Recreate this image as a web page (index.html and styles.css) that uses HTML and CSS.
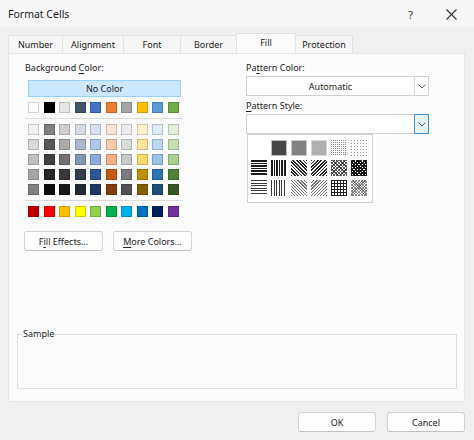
FILE: index.html
```html
<!DOCTYPE html>
<html>
<head>
<meta charset="utf-8">
<link rel="stylesheet" href="styles.css">
</head>
<body>
<div class="window">
  <div class="titlebar">
    <span class="title">Format Cells</span>
    <span class="help">?</span>
    <svg class="close" width="11" height="11" viewBox="0 0 11 11"><path d="M0.5 0.5 L10.5 10.5 M10.5 0.5 L0.5 10.5" stroke="#333" stroke-width="1.1" fill="none"/></svg>
  </div>
  <div class="tabs">
    <div class="tab">Number</div>
    <div class="tab">Alignment</div>
    <div class="tab">Font</div>
    <div class="tab">Border</div>
    <div class="tab active">Fill</div>
    <div class="tab">Protection</div>
  </div>
  <div class="panel">
    <div class="columns">
      <div class="left">
        <div class="label">Background <u>C</u>olor:</div>
        <div class="nocolor">No Color</div>
        <div class="swatches top">
          <i style="background:#ffffff"></i><i style="background:#000000"></i><i style="background:#e7e6e6"></i><i style="background:#44546a"></i><i style="background:#4472c4"></i><i style="background:#ed7d31"></i><i style="background:#a5a5a5"></i><i style="background:#ffc000"></i><i style="background:#5b9bd5"></i><i style="background:#70ad47"></i>
        </div>
        <div class="sep"></div>
        <div class="swatches grid">
          <i style="background:#f2f2f2"></i><i style="background:#808080"></i><i style="background:#d0cece"></i><i style="background:#d6dce4"></i><i style="background:#d9e1f2"></i><i style="background:#fce4d6"></i><i style="background:#ededed"></i><i style="background:#fff2cc"></i><i style="background:#ddebf7"></i><i style="background:#e2efda"></i>
          <i style="background:#d9d9d9"></i><i style="background:#595959"></i><i style="background:#aeaaaa"></i><i style="background:#acb9ca"></i><i style="background:#b4c6e7"></i><i style="background:#f8cbad"></i><i style="background:#dbdbdb"></i><i style="background:#ffe699"></i><i style="background:#bdd7ee"></i><i style="background:#c6e0b4"></i>
          <i style="background:#bfbfbf"></i><i style="background:#404040"></i><i style="background:#757171"></i><i style="background:#8497b0"></i><i style="background:#8ea9db"></i><i style="background:#f4b084"></i><i style="background:#c9c9c9"></i><i style="background:#ffd966"></i><i style="background:#9bc2e6"></i><i style="background:#a9d08e"></i>
          <i style="background:#a6a6a6"></i><i style="background:#262626"></i><i style="background:#3a3838"></i><i style="background:#333f4f"></i><i style="background:#305496"></i><i style="background:#c65911"></i><i style="background:#7b7b7b"></i><i style="background:#bf8f00"></i><i style="background:#2f75b5"></i><i style="background:#548235"></i>
          <i style="background:#808080"></i><i style="background:#0d0d0d"></i><i style="background:#171616"></i><i style="background:#222b35"></i><i style="background:#203764"></i><i style="background:#833c0c"></i><i style="background:#525252"></i><i style="background:#806000"></i><i style="background:#1f4e78"></i><i style="background:#375623"></i>
        </div>
        <div class="sep"></div>
        <div class="swatches std">
          <i style="background:#c00000"></i><i style="background:#ff0000"></i><i style="background:#ffc000"></i><i style="background:#ffff00"></i><i style="background:#92d050"></i><i style="background:#00b050"></i><i style="background:#00b0f0"></i><i style="background:#0070c0"></i><i style="background:#002060"></i><i style="background:#7030a0"></i>
        </div>
        <div class="btnrow">
          <div class="btn">F<u>i</u>ll Effects...</div>
          <div class="btn"><u>M</u>ore Colors...</div>
        </div>
      </div>
      <div class="right">
        <div class="label">Pa<u>t</u>tern Color:</div>
        <div class="combo">
          <div class="combo-text">Automatic</div>
          <div class="combo-btn"><svg width="8" height="5" viewBox="0 0 8 5"><path d="M0.5 0.5 L4 4 L7.5 0.5" stroke="#666" fill="none"/></svg></div>
        </div>
        <div class="label second"><u>P</u>attern Style:</div>
        <div class="combo open">
          <div class="combo-text"></div>
          <div class="combo-btn"><svg width="8" height="5" viewBox="0 0 8 5"><path d="M0.5 0.5 L4 4 L7.5 0.5" stroke="#555" fill="none"/></svg></div>
          <div class="popup">
            <i class="pat p-none"></i><i class="pat p75"></i><i class="pat p50"></i><i class="pat p25"></i><i class="pat p12"></i><i class="pat p6"></i>
            <i class="pat h-thick"></i><i class="pat v-thick"></i><i class="pat rd-thick"></i><i class="pat d-thick"></i><i class="pat dx"></i><i class="pat dx-thick"></i>
            <i class="pat h-thin"></i><i class="pat v-thin"></i><i class="pat rd-thin"></i><i class="pat d-thin"></i><i class="pat hx-thin"></i><i class="pat dx-thin"></i>
          </div>
        </div>
      </div>
    </div>
    <fieldset class="sample">
      <legend>Sample</legend>
    </fieldset>
  </div>
  <div class="footer">
    <div class="btn wide">OK</div>
    <div class="btn wide">Cancel</div>
  </div>
</div>
</body>
</html>
```
FILE: styles.css
```css
html, body {
  margin: 0;
  padding: 0;
}
body {
  background: #f0f0f0;
  font-family: "Noto Sans", "Open Sans", sans-serif;
  font-size: 9px;
  color: #1b1b1b;
}
u {
  text-decoration-thickness: 1px;
  text-underline-offset: 2px;
}
.window {
  width: 474px;
  height: 440px;
  background: #f0f0f0;
  overflow: hidden;
}
.titlebar {
  height: 27px;
  background: #f7f7f7;
  display: flex;
  align-items: center;
  padding-left: 8px;
  padding-top: 1px;
  box-sizing: border-box;
}
.title {
  font-size: 10.5px;
  flex: 1;
}
.help {
  font-size: 11px;
  margin-right: 33px;
  color: #333;
}
.close {
  margin-right: 17px;
}
.tabs {
  display: flex;
  align-items: flex-end;
  padding-left: 8px;
  margin-top: 6px;
  height: 20px;
}
.tab {
  height: 18px;
  box-sizing: border-box;
  background: #f6f6f6;
  border: 1px solid #e3e3e3;
  border-bottom: none;
  margin-right: -1px;
  display: flex;
  align-items: center;
  justify-content: center;
}
.tab:nth-child(1) { width: 55px; }
.tab:nth-child(2) { width: 62px; }
.tab:nth-child(3) { width: 58px; }
.tab:nth-child(4) { width: 57px; }
.tab:nth-child(5) { width: 60px; }
.tab:nth-child(6) { width: 58px; }
.tab.active {
  height: 20px;
  background: #fbfbfb;
  position: relative;
  z-index: 1;
  padding-bottom: 2px;
}
.panel {
  margin: 0 9px 0 8px;
  height: 349px;
  box-sizing: border-box;
  background: #fbfbfb;
  border: 1px solid #e6e6e6;
  padding-top: 6px;
  display: flex;
  flex-direction: column;
}
.columns {
  display: flex;
  height: 268px;
}
.left {
  width: 237px;
  padding-left: 16px;
  box-sizing: border-box;
}
.right {
  width: 183px;
}
.label {
  height: 16px;
  line-height: 16px;
}
.label.second {
  margin-top: 2px;
}
.nocolor {
  margin: 4px 0 0 3px;
  width: 153px;
  height: 17px;
  box-sizing: border-box;
  background: #cce8ff;
  border: 1px solid #99d1ff;
  display: flex;
  align-items: center;
  justify-content: center;
}
.swatches {
  display: grid;
  grid-template-columns: repeat(10, 11px);
  column-gap: 4.5px;
  row-gap: 4px;
  margin-left: 3px;
}
.swatches i {
  display: block;
  width: 11px;
  height: 11px;
  box-sizing: border-box;
  border: 1px solid rgba(0, 0, 0, 0.18);
}
.swatches.top {
  margin-top: 5px;
}
.sep {
  height: 1px;
  background: #dcdcdc;
  width: 158px;
  margin: 5px 0 5px 0;
}
.btnrow {
  display: flex;
  gap: 10px;
  margin-top: 14px;
  margin-left: -1px;
}
.btn {
  width: 79px;
  height: 20px;
  box-sizing: border-box;
  background: #fdfdfd;
  border: 1px solid #d3d3d3;
  border-bottom-color: #c2c2c2;
  border-radius: 3px;
  display: flex;
  align-items: center;
  justify-content: center;
}
.combo {
  position: relative;
  height: 20px;
  box-sizing: border-box;
  background: #ffffff;
  border: 1px solid #d0d0d0;
  display: flex;
}
.combo-text {
  flex: 1;
  display: flex;
  align-items: center;
  justify-content: center;
}
.combo-btn {
  width: 13px;
  border-left: 1px solid #d6d6d6;
  display: flex;
  align-items: center;
  justify-content: center;
}
.combo.open .combo-btn {
  background: #e5f1fb;
  border: 1px solid #3c8fd9;
  margin: -1px -1px -1px 0;
}
.popup {
  position: absolute;
  left: 0;
  top: 19px;
  width: 126px;
  height: 69px;
  box-sizing: border-box;
  background: #ffffff;
  border: 1px solid #cfcfcf;
  display: grid;
  grid-template-columns: repeat(6, 16px);
  grid-auto-rows: 16px;
  column-gap: 4px;
  row-gap: 4px;
  padding: 5px 0 0 3px;
  z-index: 5;
}
.pat {
  display: block;
  width: 16px;
  height: 16px;
  background: #fff;
}
.p75 { background: #464646; border: 1px solid #bdbdbd; box-sizing: border-box; }
.p50 { background: #828282; border: 1px solid #c9c9c9; box-sizing: border-box; }
.p25 { background: #b0b0b0; border: 1px solid #d6d6d6; box-sizing: border-box; }
.p12 {
  background-color: #fff;
  background-image:
    repeating-linear-gradient(to right, transparent 0 1px, #fff 1px 2px),
    repeating-linear-gradient(to bottom, #8a8a8a 0 1px, #fff 1px 2px);
}
.p6 {
  background-color: #fff;
  background-image:
    repeating-linear-gradient(to right, transparent 0 1px, #fff 1px 3px),
    repeating-linear-gradient(to bottom, #999 0 1px, #fff 1px 3px);
}
.h-thick { background: repeating-linear-gradient(to bottom, #1a1a1a 0 1.5px, #fff 1.5px 2.6px); }
.v-thick { background: repeating-linear-gradient(to right, #1a1a1a 0 1.5px, #fff 1.5px 2.6px); }
.h-thin { background: repeating-linear-gradient(to bottom, #3a3a3a 0 1px, #fff 1px 2.6px); }
.v-thin { background: repeating-linear-gradient(to right, #3a3a3a 0 1px, #fff 1px 2.6px); }
.rd-thick { background: repeating-linear-gradient(45deg, #2a2a2a 0 1.2px, #fff 1.2px 2.4px); }
.d-thick { background: repeating-linear-gradient(-45deg, #2a2a2a 0 1.2px, #fff 1.2px 2.4px); }
.rd-thin { background: repeating-linear-gradient(45deg, #777 0 0.9px, #fff 0.9px 2.2px); }
.d-thin { background: repeating-linear-gradient(-45deg, #777 0 0.9px, #fff 0.9px 2.2px); }
.dx {
  background:
    repeating-linear-gradient(45deg, rgba(40,40,40,0.75) 0 1px, transparent 1px 2.4px),
    repeating-linear-gradient(-45deg, rgba(40,40,40,0.75) 0 1px, transparent 1px 2.4px),
    #fff;
}
.dx-thick {
  background:
    repeating-linear-gradient(45deg, #111 0 1.4px, transparent 1.4px 2.4px),
    repeating-linear-gradient(-45deg, #222 0 1.4px, transparent 1.4px 2.4px),
    #fff;
}
.hx-thin {
  background:
    repeating-linear-gradient(to bottom, #222 0 1px, transparent 1px 3px),
    repeating-linear-gradient(to right, #222 0 1px, transparent 1px 3px),
    #fff;
}
.dx-thin {
  background:
    repeating-linear-gradient(45deg, rgba(90,90,90,0.7) 0 0.8px, transparent 0.8px 2px),
    repeating-linear-gradient(-45deg, rgba(90,90,90,0.7) 0 0.8px, transparent 0.8px 2px),
    #fff;
}
.sample {
  margin: 0 7px 0 8px;
  height: 61px;
  box-sizing: border-box;
  border: 1px solid #dedede;
  padding: 0;
  min-width: 0;
}
.sample legend {
  padding: 0;
  margin-left: 5px;
  line-height: 12px;
}
.footer {
  display: flex;
  justify-content: flex-end;
  gap: 11px;
  padding-right: 9px;
  margin-top: 10px;
}
.btn.wide {
  width: 78px;
}
```
